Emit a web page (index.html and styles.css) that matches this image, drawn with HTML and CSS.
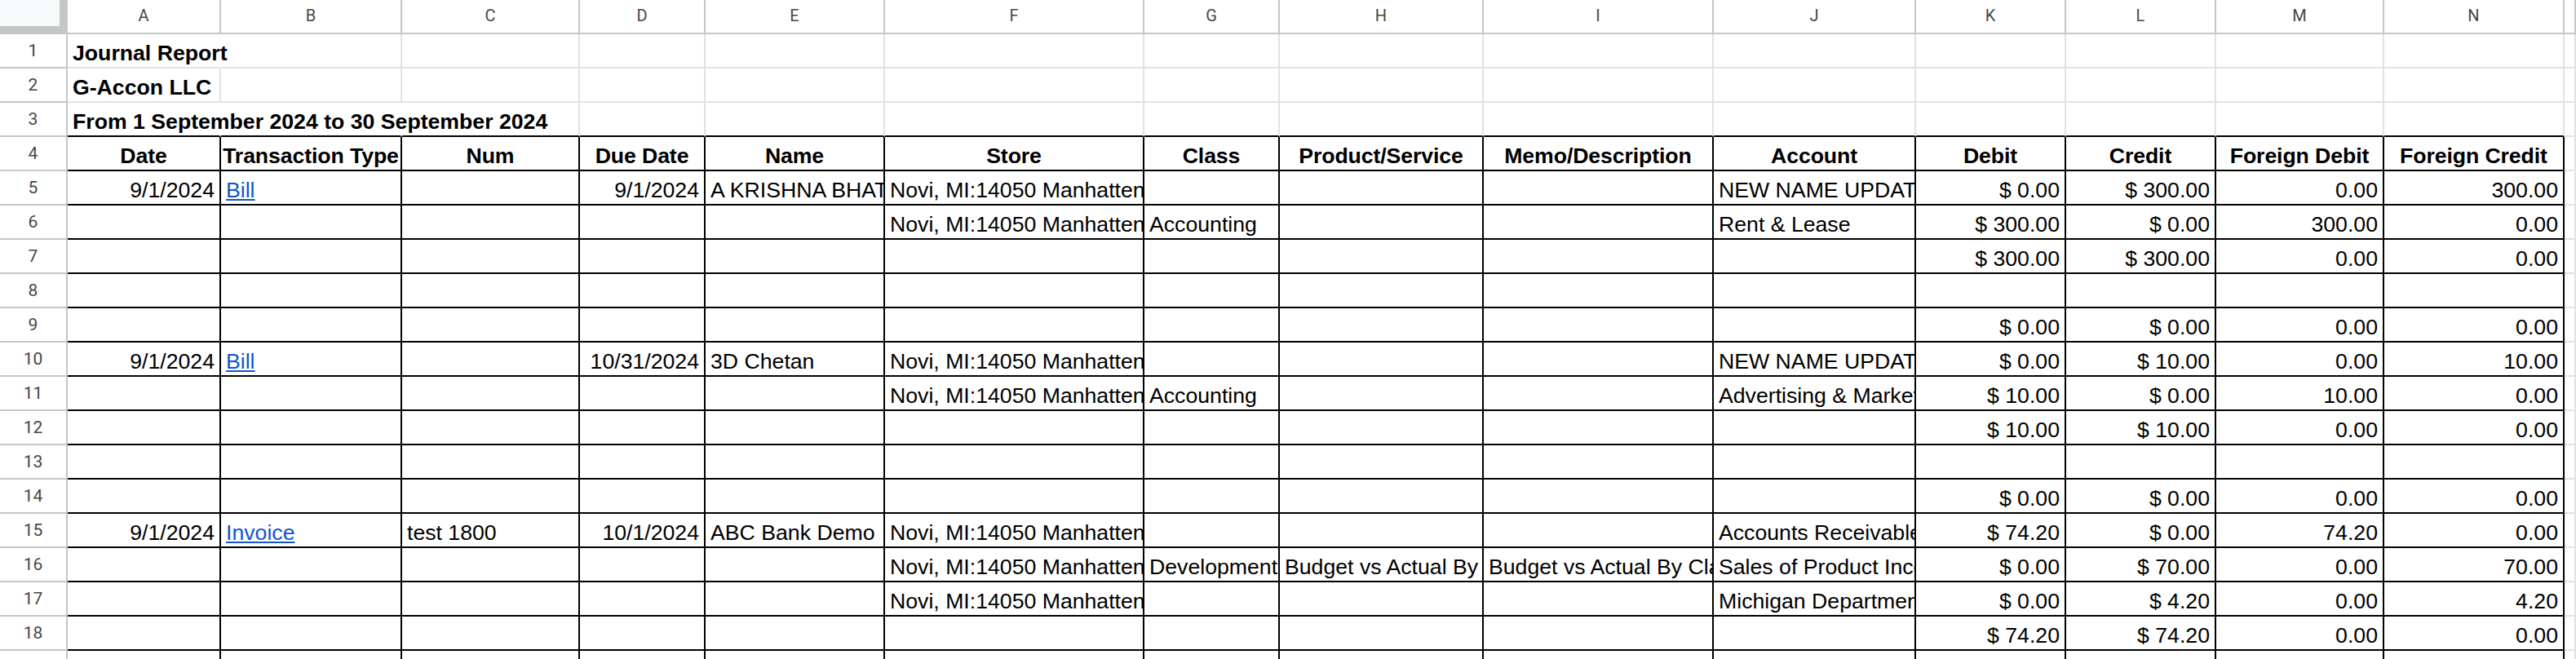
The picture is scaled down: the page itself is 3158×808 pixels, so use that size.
FILE: index.html
```html
<!DOCTYPE html>
<html lang="en">
<head>
    <meta charset="UTF-8">
    <title>Journal Report</title>
    <link rel="stylesheet" href="styles.css">
</head>
<body>
    <table class="sheet">
        <colgroup>
            <col style="width: 83px">
            <col style="width: 188px">
            <col style="width: 222px">
            <col style="width: 218px">
            <col style="width: 154px">
            <col style="width: 220px">
            <col style="width: 318px">
            <col style="width: 166px">
            <col style="width: 250px">
            <col style="width: 282px">
            <col style="width: 248px">
            <col style="width: 184px">
            <col style="width: 184px">
            <col style="width: 206px">
            <col style="width: 221px">
            <col style="width: 14px">
        </colgroup>
        <tr class="letters">
            <th class="corner"></th>
            <th>A</th><th>B</th><th>C</th><th>D</th><th>E</th><th>F</th><th>G</th>
            <th>H</th><th>I</th><th>J</th><th>K</th><th>L</th><th>M</th><th>N</th><th></th>
        </tr>
        <tr>
            <th class="rn">1</th>
            <td class="title spill">Journal Report</td><td></td><td></td><td></td><td></td><td></td><td></td>
            <td></td><td></td><td></td><td></td><td></td><td></td><td></td><td></td>
        </tr>
        <tr>
            <th class="rn">2</th>
            <td class="title">G-Accon LLC</td><td></td><td></td><td></td><td></td><td></td><td></td>
            <td></td><td></td><td></td><td></td><td></td><td></td><td></td><td></td>
        </tr>
        <tr class="above">
            <th class="rn">3</th>
            <td class="title spill">From 1 September 2024 to 30 September 2024</td><td class="spill"></td><td></td><td></td><td></td><td></td><td></td>
            <td></td><td></td><td></td><td></td><td></td><td></td><td></td><td class="pad"></td>
        </tr>
        <tr class="data head">
            <th class="rn">4</th>
            <td>Date</td><td>Transaction Type</td><td>Num</td><td>Due Date</td><td>Name</td><td>Store</td><td>Class</td>
            <td>Product/Service</td><td>Memo/Description</td><td>Account</td><td>Debit</td><td>Credit</td><td>Foreign Debit</td><td>Foreign Credit</td><td class="pad"></td>
        </tr>
        <tr class="data">
            <th class="rn">5</th>
            <td class="num">9/1/2024</td><td><a href="#">Bill</a></td><td></td><td class="num">9/1/2024</td><td>A KRISHNA BHAT</td><td>Novi, MI:14050 Manhatten</td><td></td>
            <td></td><td></td><td>NEW NAME UPDATED</td><td class="num">$ 0.00</td><td class="num">$ 300.00</td><td class="num">0.00</td><td class="num">300.00</td><td class="pad"></td>
        </tr>
        <tr class="data">
            <th class="rn">6</th>
            <td></td><td></td><td></td><td></td><td></td><td>Novi, MI:14050 Manhatten</td><td>Accounting</td>
            <td></td><td></td><td>Rent &amp; Lease</td><td class="num">$ 300.00</td><td class="num">$ 0.00</td><td class="num">300.00</td><td class="num">0.00</td><td class="pad"></td>
        </tr>
        <tr class="data">
            <th class="rn">7</th>
            <td></td><td></td><td></td><td></td><td></td><td></td><td></td>
            <td></td><td></td><td></td><td class="num">$ 300.00</td><td class="num">$ 300.00</td><td class="num">0.00</td><td class="num">0.00</td><td class="pad"></td>
        </tr>
        <tr class="data">
            <th class="rn">8</th>
            <td></td><td></td><td></td><td></td><td></td><td></td><td></td>
            <td></td><td></td><td></td><td></td><td></td><td></td><td></td><td class="pad"></td>
        </tr>
        <tr class="data">
            <th class="rn">9</th>
            <td></td><td></td><td></td><td></td><td></td><td></td><td></td>
            <td></td><td></td><td></td><td class="num">$ 0.00</td><td class="num">$ 0.00</td><td class="num">0.00</td><td class="num">0.00</td><td class="pad"></td>
        </tr>
        <tr class="data">
            <th class="rn">10</th>
            <td class="num">9/1/2024</td><td><a href="#">Bill</a></td><td></td><td class="num">10/31/2024</td><td>3D Chetan</td><td>Novi, MI:14050 Manhatten</td><td></td>
            <td></td><td></td><td>NEW NAME UPDATED</td><td class="num">$ 0.00</td><td class="num">$ 10.00</td><td class="num">0.00</td><td class="num">10.00</td><td class="pad"></td>
        </tr>
        <tr class="data">
            <th class="rn">11</th>
            <td></td><td></td><td></td><td></td><td></td><td>Novi, MI:14050 Manhatten</td><td>Accounting</td>
            <td></td><td></td><td>Advertising &amp; Marketing</td><td class="num">$ 10.00</td><td class="num">$ 0.00</td><td class="num">10.00</td><td class="num">0.00</td><td class="pad"></td>
        </tr>
        <tr class="data">
            <th class="rn">12</th>
            <td></td><td></td><td></td><td></td><td></td><td></td><td></td>
            <td></td><td></td><td></td><td class="num">$ 10.00</td><td class="num">$ 10.00</td><td class="num">0.00</td><td class="num">0.00</td><td class="pad"></td>
        </tr>
        <tr class="data">
            <th class="rn">13</th>
            <td></td><td></td><td></td><td></td><td></td><td></td><td></td>
            <td></td><td></td><td></td><td></td><td></td><td></td><td></td><td class="pad"></td>
        </tr>
        <tr class="data">
            <th class="rn">14</th>
            <td></td><td></td><td></td><td></td><td></td><td></td><td></td>
            <td></td><td></td><td></td><td class="num">$ 0.00</td><td class="num">$ 0.00</td><td class="num">0.00</td><td class="num">0.00</td><td class="pad"></td>
        </tr>
        <tr class="data">
            <th class="rn">15</th>
            <td class="num">9/1/2024</td><td><a href="#">Invoice</a></td><td>test 1800</td><td class="num">10/1/2024</td><td>ABC Bank Demo</td><td>Novi, MI:14050 Manhatten</td><td></td>
            <td></td><td></td><td>Accounts Receivable (A/R)</td><td class="num">$ 74.20</td><td class="num">$ 0.00</td><td class="num">74.20</td><td class="num">0.00</td><td class="pad"></td>
        </tr>
        <tr class="data">
            <th class="rn">16</th>
            <td></td><td></td><td></td><td></td><td></td><td>Novi, MI:14050 Manhatten</td><td>Development</td>
            <td>Budget vs Actual By Class</td><td>Budget vs Actual By Class</td><td>Sales of Product Income</td><td class="num">$ 0.00</td><td class="num">$ 70.00</td><td class="num">0.00</td><td class="num">70.00</td><td class="pad"></td>
        </tr>
        <tr class="data">
            <th class="rn">17</th>
            <td></td><td></td><td></td><td></td><td></td><td>Novi, MI:14050 Manhatten</td><td></td>
            <td></td><td></td><td>Michigan Department of Treasury</td><td class="num">$ 0.00</td><td class="num">$ 4.20</td><td class="num">0.00</td><td class="num">4.20</td><td class="pad"></td>
        </tr>
        <tr class="data">
            <th class="rn">18</th>
            <td></td><td></td><td></td><td></td><td></td><td></td><td></td>
            <td></td><td></td><td></td><td class="num">$ 74.20</td><td class="num">$ 74.20</td><td class="num">0.00</td><td class="num">0.00</td><td class="pad"></td>
        </tr>
        <tr class="data">
            <th class="rn">19</th>
            <td></td><td></td><td></td><td></td><td></td><td></td><td></td>
            <td></td><td></td><td></td><td></td><td></td><td></td><td></td><td class="pad"></td>
        </tr>
    </table>
</body>
</html>
```

FILE: styles.css
```css
body {
    margin: 0;
    background-color: #ffffff;
    overflow: hidden;
    height: 808px;
}
.sheet {
    table-layout: fixed;
    width: 3158px;
    border-collapse: separate;
    border-spacing: 0;
    font-family: 'Liberation Sans', Arial, sans-serif;
    font-size: 26.67px;
    color: #000000;
}
.sheet tr {
    height: 42px;
}
.sheet th {
    font-family: Roboto, 'Liberation Sans', sans-serif;
    font-weight: normal;
    color: #444746;
    text-align: center;
    vertical-align: middle;
    padding: 0;
    border-right: 2px solid #c4c7c5;
    border-bottom: 2px solid #c4c7c5;
    background-color: #ffffff;
}
.letters th {
    font-size: 20px;
    padding-bottom: 3px;
}
.letters th.corner {
    background-color: #f8f9fa;
    box-shadow: inset -8px -8px 0 #c4c7c5;
}
.rn {
    font-size: 21px;
}
.sheet td {
    padding: 0 6px 1px 6px;
    line-height: 1.15;
    vertical-align: bottom;
    white-space: nowrap;
    overflow: hidden;
    border-right: 2px solid #e2e2e3;
    border-bottom: 2px solid #e2e2e3;
}
.sheet td.title {
    font-weight: bold;
    overflow: visible;
}
.sheet td.spill {
    border-right-color: transparent;
}
.above td {
    border-bottom-color: #000000;
}
.data td {
    border-right-color: #000000;
    border-bottom-color: #000000;
}
.above td.pad,
.data td.pad {
    border-right-color: #e2e2e3;
    border-bottom-color: #e2e2e3;
}
.head td {
    font-weight: bold;
    text-align: center;
    padding-left: 0;
    padding-right: 0;
    letter-spacing: -0.1px;
}
.num {
    text-align: right;
}
.sheet a {
    color: #1155cc;
    text-decoration: underline;
}
```
